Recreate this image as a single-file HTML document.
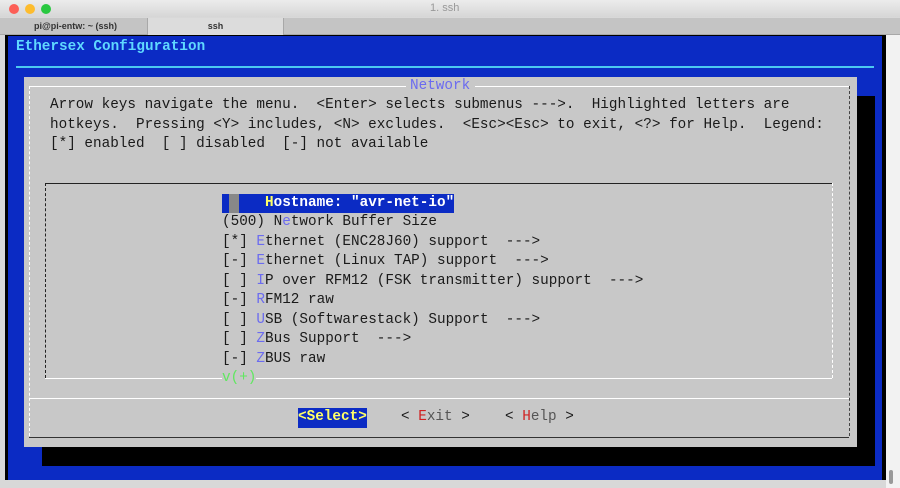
<!DOCTYPE html>
<html><head><meta charset="utf-8"><style>
*{margin:0;padding:0;box-sizing:border-box}
body{width:900px;height:488px;overflow:hidden;background:#d8d8d8;font-family:"Liberation Sans",sans-serif;position:relative}
.a{position:absolute}
.m{font-family:"Liberation Mono","DejaVu Sans Mono",monospace;font-size:14.33px;white-space:pre;line-height:19.5px;color:#1a1a1a}
.hk{color:#6b6bf0}
.dl{border-left:1px dashed}
</style></head><body>
<div class="a" style="left:0;top:0;width:900px;height:17px;background:linear-gradient(#ececec,#d6d6d6)"></div>
<div class="a" style="left:9px;top:4px;width:10px;height:10px;border-radius:50%;background:#fc5f57"></div>
<div class="a" style="left:25px;top:4px;width:10px;height:10px;border-radius:50%;background:#fdbc2e"></div>
<div class="a" style="left:41px;top:4px;width:10px;height:10px;border-radius:50%;background:#29c840"></div>
<div class="a" style="left:430px;top:2px;font-size:11px;color:#999">1. ssh</div>
<div class="a" style="left:0;top:18px;width:900px;height:17px;background:#c4c4c4;border-bottom:1px solid #a8a8a8"></div>
<div class="a" style="left:4px;top:18px;width:144px;height:16px;border-right:1px solid #a8a8a8;font-size:9px;font-weight:bold;color:#333;text-align:center;line-height:17px">pi@pi-entw: ~ (ssh)</div>
<div class="a" style="left:148px;top:18px;width:136px;height:17px;background:#dcdcdc;border-right:1px solid #a8a8a8;font-size:9px;font-weight:bold;color:#333;text-align:center;line-height:17px">ssh</div>
<div class="a" style="left:5px;top:35px;width:881px;height:445px;background:#000"></div>
<div class="a" style="left:8px;top:36px;width:874px;height:444px;background:#0b2bc4"></div>
<div class="a" style="left:886px;top:35px;width:14px;height:453px;background:#f2f2f2"></div>
<div class="a" style="left:889px;top:470px;width:4px;height:14px;background:#999;border-radius:2px"></div>
<div class="a m" style="left:16px;top:38px;color:#5fd8ff;font-weight:bold">Ethersex Configuration</div>
<div class="a" style="left:16px;top:66px;width:858px;height:2px;background:#4cc8f0"></div>
<div class="a" style="left:42px;top:96px;width:833px;height:370px;background:#000"></div>
<div class="a" style="left:24px;top:77px;width:833px;height:370px;background:#c8c8c8"></div>
<div class="a" style="left:29px;top:86px;width:377px;height:1px;background:#fff"></div>
<div class="a" style="left:475px;top:86px;width:374px;height:1px;background:#fff"></div>
<div class="a" style="left:29px;top:86px;width:0;height:350px;border-left:1px dashed #fff"></div>
<div class="a" style="left:849px;top:86px;width:0;height:350px;border-left:1px dashed #444"></div>
<div class="a" style="left:29px;top:437px;width:820px;height:1px;background:#333"></div>
<div class="a m" style="left:410px;top:77px;color:#6b6bf0">Network</div>
<div class="a m" style="left:50px;top:96px">Arrow keys navigate the menu.  &lt;Enter&gt; selects submenus ---&gt;.  Highlighted letters are
hotkeys.  Pressing &lt;Y&gt; includes, &lt;N&gt; excludes.  &lt;Esc&gt;&lt;Esc&gt; to exit, &lt;?&gt; for Help.  Legend:
[*] enabled  [ ] disabled  [-] not available</div>
<div class="a" style="left:45px;top:183px;width:787px;height:1px;background:#222"></div>
<div class="a" style="left:45px;top:183px;width:0;height:195px;border-left:1px dashed #222"></div>
<div class="a" style="left:832px;top:183px;width:0;height:195px;border-left:1px dashed #fff"></div>
<div class="a" style="left:45px;top:378px;width:787px;height:1px;background:#fff"></div>
<div class="a" style="left:222px;top:194px;width:232px;height:19px;background:#0b2bc4"></div>
<div class="a" style="left:229px;top:194px;width:10px;height:19px;background:#888"></div>
<div class="a m" style="left:222px;top:194px;color:#fff;font-weight:bold">     <span style="color:#ffff66">H</span>ostname: "avr-net-io"</div>
<div class="a m" style="left:222px;top:213px">(500) N<span class="hk">e</span>twork Buffer Size
[*] <span class="hk">E</span>thernet (ENC28J60) support  ---&gt;
[-] <span class="hk">E</span>thernet (Linux TAP) support  ---&gt;
[ ] <span class="hk">I</span>P over RFM12 (FSK transmitter) support  ---&gt;
[-] <span class="hk">R</span>FM12 raw
[ ] <span class="hk">U</span>SB (Softwarestack) Support  ---&gt;
[ ] <span class="hk">Z</span>Bus Support  ---&gt;
[-] <span class="hk">Z</span>BUS raw</div>
<div class="a m" style="left:222px;top:369px;color:#5fe85f;background:#c8c8c8">v(+)</div>
<div class="a" style="left:29px;top:398px;width:820px;height:1px;background:#fff"></div>
<div class="a m" style="left:298px;top:408px;background:#0b2bc4;color:#ffff66;font-weight:bold">&lt;Select&gt;</div>
<div class="a m" style="left:401px;top:408px">&lt; <span style="color:#d02020">E</span><span style="color:#555">xit</span> &gt;</div>
<div class="a m" style="left:505px;top:408px">&lt; <span style="color:#d02020">H</span><span style="color:#555">elp</span> &gt;</div>
</body></html>
